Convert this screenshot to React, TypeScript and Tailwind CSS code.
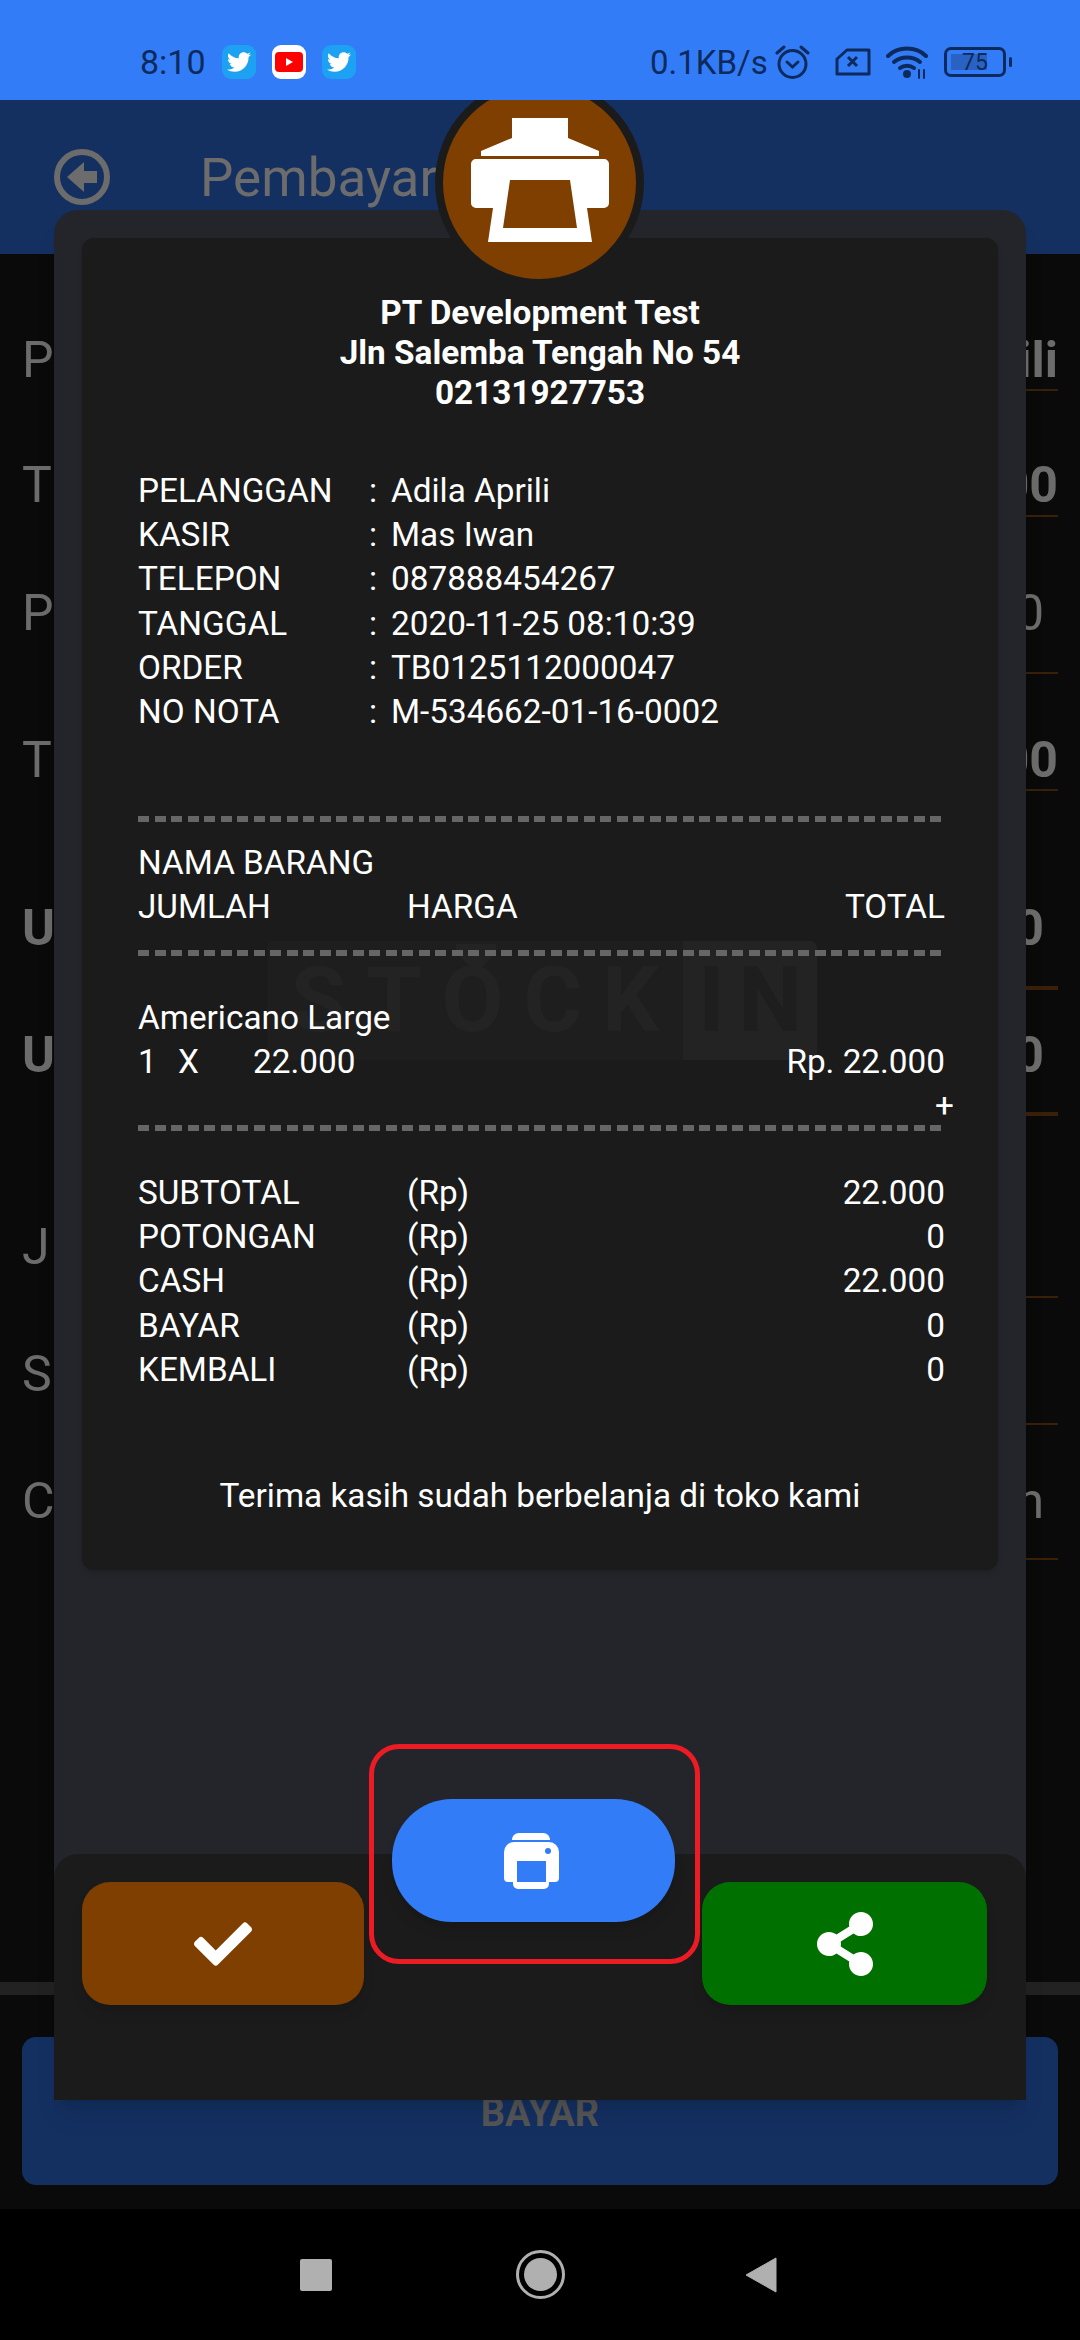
import { FaCheck, FaShareAlt, FaTwitter } from "react-icons/fa";

// rows of the payment page that is dimmed behind the receipt
const pageRows = [
  { letter: "P", tail: "ili", h: "h-[137px]", rule: "h-[2px]", text: "bottom-[6px]", tailClass: "right-0 font-bold" },
  { letter: "T", tail: "00", h: "h-[126px]", rule: "h-[2px]", text: "bottom-[7px]", tailClass: "right-0 font-bold" },
  { letter: "P", tail: "0", h: "h-[157px]", rule: "h-[2px]", text: "bottom-[36px]", tailClass: "right-[14px]" },
  { letter: "T", tail: "00", h: "h-[117px]", rule: "h-[2px]", text: "bottom-[6px]", tailClass: "right-0 font-bold" },
  { letter: "U", tail: "0", h: "h-[199px]", rule: "h-[4px]", text: "bottom-[37px] font-bold", tailClass: "right-[14px]" },
  { letter: "U", tail: "0", h: "h-[126px]", rule: "h-[4px]", text: "bottom-[36px] font-bold", tailClass: "right-[14px]" },
  { letter: "J", tail: "", h: "h-[182px]", rule: "h-[2px]", text: "bottom-[26px]", tailClass: "right-[14px]" },
  { letter: "S", tail: "", h: "h-[127px]", rule: "h-[2px]", text: "bottom-[26px]", tailClass: "right-[14px]" },
  { letter: "C", tail: "n", h: "h-[135px]", rule: "h-[2px]", text: "bottom-[34px]", tailClass: "right-[14px]" },
];

const info = [
  ["PELANGGAN", "Adila Aprili"],
  ["KASIR", "Mas Iwan"],
  ["TELEPON", "087888454267"],
  ["TANGGAL", "2020-11-25 08:10:39"],
  ["ORDER", "TB0125112000047"],
  ["NO NOTA", "M-534662-01-16-0002"],
];

const totals = [
  ["SUBTOTAL", "22.000"],
  ["POTONGAN", "0"],
  ["CASH", "22.000"],
  ["BAYAR", "0"],
  ["KEMBALI", "0"],
];

function Dashes() {
  return (
    <div className="flex h-[6px] w-[806px] gap-[5.5px] overflow-hidden">
      {Array.from({ length: 49 }).map((_, i) => (
        <div key={i} className="h-[6px] w-[11px] shrink-0 bg-[#666666]" />
      ))}
    </div>
  );
}

function StatusBar() {
  return (
    <div className="relative z-30 flex h-[100px] items-center bg-[#337cf8] pl-[140px] pt-[24px] text-[#0d2a5c]">
      <span className="w-[82px] text-[34px] leading-none">8:10</span>
      <div className="flex h-[34px] w-[34px] items-center justify-center rounded-[9px] bg-[#1da1f2]">
        <FaTwitter className="text-[24px] text-white" />
      </div>
      <div className="ml-[16px] flex h-[34px] w-[34px] items-center justify-center rounded-[9px] bg-white">
        <svg viewBox="0 0 28 20" className="h-[20px] w-[28px]">
          <rect width="28" height="20" rx="4" fill="#ff0000" />
          <path d="M11 6l7 4-7 4z" fill="#fff" />
        </svg>
      </div>
      <div className="ml-[16px] flex h-[34px] w-[34px] items-center justify-center rounded-[9px] bg-[#1da1f2]">
        <FaTwitter className="text-[24px] text-white" />
      </div>
      <span className="ml-[294px] w-[125px] text-[33px] leading-none">0.1KB/s</span>
      <svg viewBox="0 0 35 34" className="h-[34px] w-[35px]" fill="none" stroke="#0d2a5c" strokeWidth="3" strokeLinecap="round">
        <circle cx="17.5" cy="19" r="13.5" />
        <path d="M2 8l7-6M33 8l-7-6" />
        <path d="M12 17l5.5 5 5.5-5" />
      </svg>
      <svg viewBox="0 0 36 28" className="ml-[25px] h-[28px] w-[36px]" fill="none" stroke="#0d2a5c" strokeWidth="3" strokeLinejoin="round">
        <path d="M12 2h22v24H2V11z" />
        <path d="M13 9l9 9M22 9l-9 9" />
      </svg>
      <svg viewBox="0 0 42 33" className="ml-[15px] h-[33px] w-[42px]" fill="none" stroke="#0d2a5c" strokeWidth="4" strokeLinecap="round">
        <path d="M2 10C12 0 30 0 40 10" />
        <path d="M8 16c7-6 19-6 26 0" />
        <path d="M14 22c4-3 10-3 14 0" />
        <circle cx="21" cy="28" r="2" fill="#0d2a5c" />
        <path d="M33 24v8M38 24v8" strokeWidth="2" />
      </svg>
      <div className="relative ml-[16px] flex h-[30px] w-[62px] items-center justify-center rounded-[7px] border-[3px] border-[#0d2a5c] text-[23px] leading-none">
        <div className="absolute left-[4px] top-[4px] h-[16px] w-[36px] bg-[#2a62c4]" />
        <span className="relative">75</span>
        <div className="absolute right-[-9px] top-[7px] h-[10px] w-[3px] rounded-sm bg-[#0d2a5c]" />
      </div>
    </div>
  );
}

function PageBehind() {
  return (
    <div className="relative flex h-[2109px] flex-col bg-[#0a0a0a]">
      <div className="flex h-[154px] items-center bg-[#143061] pl-[54px]">
        <svg viewBox="0 0 56 56" className="h-[56px] w-[56px]">
          <circle cx="28" cy="28" r="25" fill="none" stroke="#6c6c6c" strokeWidth="6" />
          <path d="M30 13v9h13v12H30v9L13 28z" fill="#6c6c6c" />
        </svg>
        <span className="ml-[90px] pt-[3px] text-[53px] leading-none text-[#6c6c6c]">Pembayaran</span>
      </div>
      <div className="flex flex-col px-[22px] text-[50px] leading-none text-[#6c6c6c]">
        {pageRows.map((r, i) => (
          <div key={i} className={`relative ${r.h} shrink-0`}>
            <div className={`absolute bottom-0 left-[100px] right-0 ${r.rule} bg-[#3a2008]`} />
            <span className={`absolute left-0 ${r.text}`}>{r.letter}</span>
            <span className={`absolute ${r.text} ${r.tailClass}`}>{r.tail}</span>
          </div>
        ))}
      </div>
      <div className="mt-[422px] h-[13px] bg-[#222222]" />
      <div className="mx-[22px] mt-[42px] flex h-[148px] items-center justify-center rounded-[14px] bg-[#143061] pt-[4px] text-[38px] font-bold text-[#555555]">
        BAYAR
      </div>
    </div>
  );
}

function Watermark() {
  return (
    <div className="absolute left-[185px] top-[703px] flex h-[119px] w-[550px] overflow-hidden rounded-[6px] bg-[#1e1e1e] text-[90px] font-bold leading-none text-[#232323]">
      <div className="flex flex-1 items-center justify-around px-[14px]">
        <span>S</span>
        <span>T</span>
        <span className="relative">
          O
          <svg viewBox="0 0 40 30" className="absolute left-[14px] top-[-12px] h-[30px] w-[40px]">
            <path d="M0 0h40v8L20 30 0 8z" fill="#232323" />
          </svg>
        </span>
        <span>C</span>
        <span>K</span>
      </div>
      <div className="flex w-[134px] items-center justify-center gap-[14px] bg-[#232323] text-[#1e1e1e]">
        <span>I</span>
        <span>N</span>
      </div>
    </div>
  );
}

function Receipt() {
  return (
    <div className="relative h-[1332px] rounded-[12px] bg-[#1b1b1b] px-[56px] text-[33.3px] leading-[44.2px] text-white shadow-md">
      <Watermark />
      <div className="relative flex flex-col">
        <div className="pt-[55px] text-center font-bold leading-[40px]">
          <div>PT Development Test</div>
          <div>Jln Salemba Tengah No 54</div>
          <div>02131927753</div>
        </div>
        <div className="mt-[56px] flex flex-col">
          {info.map(([k, v]) => (
            <div key={k} className="flex">
              <span className="w-[231px]">{k}</span>
              <span className="w-[22px]">:</span>
              <span>{v}</span>
            </div>
          ))}
        </div>
        <div className="mt-[82px]"><Dashes /></div>
        <div className="mt-[19px]">NAMA BARANG</div>
        <div className="flex">
          <span className="w-[269px]">JUMLAH</span>
          <span className="flex-1">HARGA</span>
          <span className="mr-[-3px]">TOTAL</span>
        </div>
        <div className="mt-[20px]"><Dashes /></div>
        <div className="mt-[40px]">Americano Large</div>
        <div className="flex">
          <span className="w-[40px]">1</span>
          <span className="w-[75px]">X</span>
          <span className="flex-1">22.000</span>
          <span className="mr-[-3px]">Rp. 22.000</span>
        </div>
        <div className="mr-[-12px] text-right leading-[44px]">+</div>
        <div className="mt-[-3px]"><Dashes /></div>
        <div className="mt-[40px] flex flex-col">
          {totals.map(([k, v]) => (
            <div key={k} className="flex">
              <span className="w-[269px]">{k}</span>
              <span className="flex-1">(Rp)</span>
              <span className="mr-[-3px]">{v}</span>
            </div>
          ))}
        </div>
        <div className="mt-[82px] text-center">Terima kasih sudah berbelanja di toko kami</div>
      </div>
    </div>
  );
}

function PrinterBadge() {
  return (
    <div className="absolute left-[435px] top-[78px] z-20 flex h-[209px] w-[209px] items-center justify-center rounded-full border-[8px] border-[#1b1b1b] bg-[#7f3f00]">
      <svg viewBox="0 0 138 124" className="mb-[5px] h-[124px] w-[138px]" fill="#fff">
        <path d="M41 0h56v20l31 13v5H10v-5l31-13z" />
        <path fillRule="evenodd" d="M5 41h128a5 5 0 0 1 5 5v39a5 5 0 0 1-5 5h-17l5 34H17l5-34H5a5 5 0 0 1-5-5V46a5 5 0 0 1 5-5zM39 62l-7 48h74l-7-48z" />
      </svg>
    </div>
  );
}

function PrintIcon() {
  return (
    <svg viewBox="0 0 56 56" className="mr-[4px] h-[56px] w-[56px]" fill="#fff">
      <path d="M8 7c0-4 3-7 7-7h24c4 0 7 3 7 7z" />
      <path d="M10 9h35a10 10 0 0 1 10 10v26a4 4 0 0 1-4 4h-6v2a5 5 0 0 1-5 5H14a5 5 0 0 1-5-5v-2H4a4 4 0 0 1-4-4V19A10 10 0 0 1 10 9z" />
      <rect x="13" y="28" width="29" height="21" fill="#337cf8" />
      <circle cx="44" cy="18" r="3" fill="#337cf8" />
    </svg>
  );
}

function ActionBar() {
  return (
    <div className="relative flex h-[246px] items-start rounded-t-[24px] bg-[#1b1b1b] px-[28px] pt-[28px]">
      <button className="flex h-[123px] w-[282px] items-center justify-center rounded-[28px] bg-[#7f3f00] text-white shadow-lg">
        <FaCheck className="text-[58px]" />
      </button>
      <button className="ml-[28px] mt-[-83px] flex h-[123px] w-[283px] items-center justify-center rounded-[60px] bg-[#337cf8] text-white shadow-lg">
        <PrintIcon />
      </button>
      <button className="ml-[27px] flex h-[123px] w-[285px] items-center justify-center rounded-[28px] bg-[#007000] text-white shadow-lg">
        <FaShareAlt className="text-[64px]" />
      </button>
      <div className="absolute left-[315px] top-[-110px] h-[220px] w-[331px] rounded-[30px] border-[5px] border-[#ed1c24]" />
    </div>
  );
}

function ReceiptModal() {
  return (
    <div className="absolute left-[54px] top-[210px] z-10 flex h-[1890px] w-[972px] flex-col justify-between rounded-t-[24px] bg-[#23252a] pt-[28px] shadow-xl">
      <div className="px-[28px]">
        <Receipt />
      </div>
      <ActionBar />
    </div>
  );
}

function NavBar() {
  return (
    <div className="flex h-[131px] items-center bg-black pl-[300px]">
      <div className="h-[32px] w-[32px] rounded-[2px] bg-[#b0b0b0]" />
      <div className="ml-[184px] flex h-[49px] w-[49px] items-center justify-center rounded-full border-[3px] border-[#b0b0b0]">
        <div className="h-[33px] w-[33px] rounded-full bg-[#b0b0b0]" />
      </div>
      <svg viewBox="0 0 32 36" className="ml-[180px] h-[36px] w-[32px]">
        <path d="M31 1v34L1 18z" fill="#b0b0b0" stroke="#b0b0b0" strokeLinejoin="round" />
      </svg>
    </div>
  );
}

export default function App() {
  return (
    <div className="relative h-[2340px] w-[1080px] overflow-hidden bg-black font-['Roboto',sans-serif]">
      <StatusBar />
      <PageBehind />
      <NavBar />
      <PrinterBadge />
      <ReceiptModal />
    </div>
  );
}
